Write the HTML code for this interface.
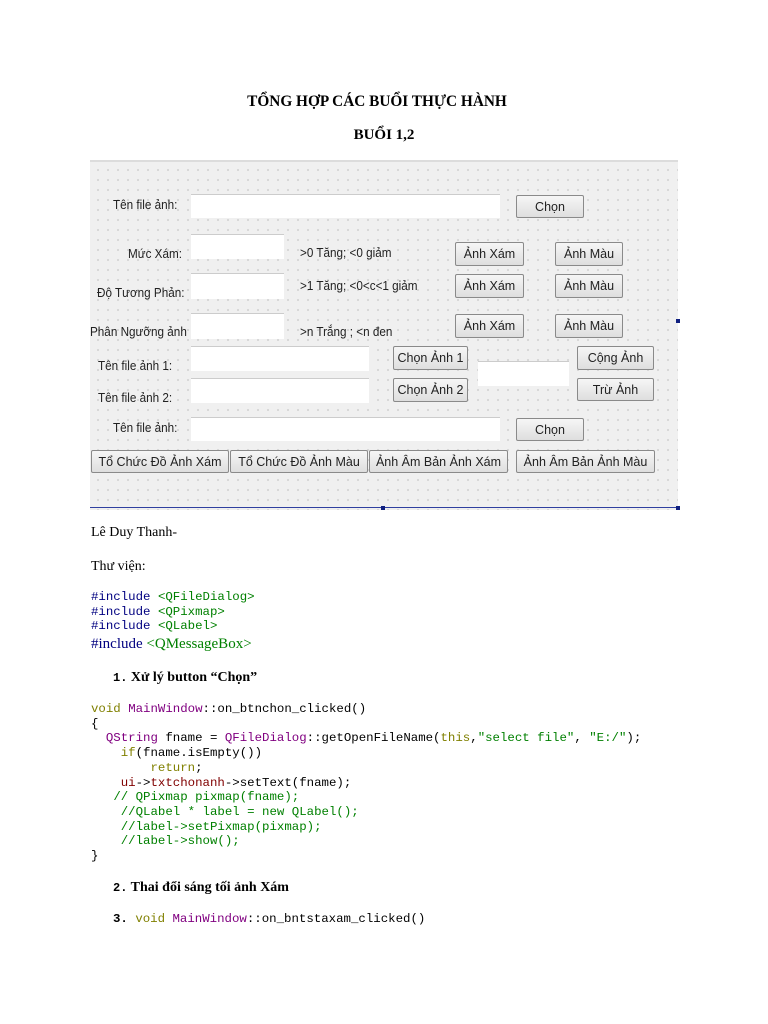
<!DOCTYPE html>
<html><head><meta charset="utf-8"><style>
body{margin:0;width:768px;height:1024px;background:#fff;position:relative;overflow:hidden;font-family:"Liberation Serif",serif;color:#000}
.a{position:absolute;white-space:pre}
.panel{position:absolute;left:90px;top:160px;width:588px;height:348px;background-color:#f0f0f0;background-image:radial-gradient(circle,#b8b8b8 0.6px,transparent 0.9px);background-size:10px 10px;background-position:3px 3px;border-top:2px solid #dcdcdc}
.l{position:absolute;font-family:"Liberation Sans",sans-serif;font-size:13px;color:#222;white-space:pre;transform:scaleX(0.9);transform-origin:left center;margin-top:3px}
.i{position:absolute;background:#fff;border-top:1px solid #ccc}
.b{position:absolute;box-sizing:border-box;border:1px solid #8a8a8a;border-radius:2px;background:linear-gradient(#f6f6f6,#dedede);font-family:"Liberation Sans",sans-serif;font-size:12.5px;color:#222;display:flex;align-items:center;justify-content:center;white-space:pre}
.c{position:absolute;font-family:"Liberation Mono",monospace;font-size:12.4px;white-space:pre;line-height:14.7px}
.k{color:#808000}.p{color:#800080}.g{color:#008000}.n{color:#000080}.r{color:#800000}
</style></head><body>
<div class="a" style="left:0;width:754px;text-align:center;top:93px;font-weight:bold;font-size:15.3px">TỔNG HỢP CÁC BUỔI THỰC HÀNH</div>
<div class="a" style="left:0;width:768px;text-align:center;top:127px;font-weight:bold;font-size:15px">BUỔI 1,2</div>

<div class="panel"></div>
<div class="a" style="left:90px;top:507px;width:588px;height:1px;background:#3040a0"></div>
<div class="a" style="left:381px;top:506px;width:4px;height:4px;background:#102080"></div>
<div class="a" style="left:676px;top:506px;width:4px;height:4px;background:#102080"></div>
<div class="a" style="left:676px;top:319px;width:4px;height:4px;background:#102080"></div>

<div class="l" style="left:113px;top:194px">Tên file ảnh:</div>
<div class="i" style="left:191px;top:194px;width:309px;height:23px"></div>
<div class="b" style="left:516px;top:195px;width:68px;height:23px">Chọn</div>

<div class="l" style="left:128px;top:243px">Mức Xám:</div>
<div class="i" style="left:191px;top:234px;width:93px;height:24px"></div>
<div class="l" style="left:300px;top:242px">&gt;0 Tăng; &lt;0 giảm</div>
<div class="b" style="left:455px;top:242px;width:69px;height:24px">Ảnh Xám</div>
<div class="b" style="left:555px;top:242px;width:68px;height:24px">Ảnh Màu</div>

<div class="l" style="left:97px;top:282px">Độ Tương Phản:</div>
<div class="i" style="left:191px;top:273px;width:93px;height:25px"></div>
<div class="l" style="left:300px;top:275px">&gt;1 Tăng; &lt;0&lt;c&lt;1 giảm</div>
<div class="b" style="left:455px;top:274px;width:69px;height:24px">Ảnh Xám</div>
<div class="b" style="left:555px;top:274px;width:68px;height:24px">Ảnh Màu</div>

<div class="l" style="left:90px;top:321px">Phân Ngưỡng ảnh</div>
<div class="i" style="left:191px;top:313px;width:93px;height:25px"></div>
<div class="l" style="left:300px;top:321px">&gt;n Trắng ; &lt;n đen</div>
<div class="b" style="left:455px;top:314px;width:69px;height:24px">Ảnh Xám</div>
<div class="b" style="left:555px;top:314px;width:68px;height:24px">Ảnh Màu</div>

<div class="l" style="left:98px;top:355px">Tên file ảnh 1:</div>
<div class="i" style="left:191px;top:346px;width:178px;height:24px"></div>
<div class="b" style="left:393px;top:346px;width:75px;height:24px">Chọn Ảnh 1</div>
<div class="i" style="left:478px;top:361px;width:91px;height:24px"></div>
<div class="b" style="left:577px;top:346px;width:77px;height:24px">Cộng Ảnh</div>

<div class="l" style="left:98px;top:387px">Tên file ảnh 2:</div>
<div class="i" style="left:191px;top:378px;width:178px;height:24px"></div>
<div class="b" style="left:393px;top:378px;width:75px;height:24px">Chọn Ảnh 2</div>
<div class="b" style="left:577px;top:378px;width:77px;height:23px">Trừ Ảnh</div>

<div class="l" style="left:113px;top:417px">Tên file ảnh:</div>
<div class="i" style="left:191px;top:417px;width:309px;height:23px"></div>
<div class="b" style="left:516px;top:418px;width:68px;height:23px">Chọn</div>

<div class="b" style="left:91px;top:450px;width:138px;height:23px">Tổ Chức Đồ Ảnh Xám</div>
<div class="b" style="left:230px;top:450px;width:138px;height:23px">Tổ Chức Đồ Ảnh Màu</div>
<div class="b" style="left:369px;top:450px;width:139px;height:23px">Ảnh Âm Bản Ảnh Xám</div>
<div class="b" style="left:516px;top:450px;width:139px;height:23px">Ảnh Âm Bản Ảnh Màu</div>

<div class="a" style="left:91px;top:525px;font-size:14px">Lê Duy Thanh-</div>
<div class="a" style="left:91px;top:559px;font-size:14px">Thư viện:</div>

<div class="c" style="left:91px;top:590px"><span class="n">#include</span> <span class="g">&lt;QFileDialog&gt;</span>
<span class="n">#include</span> <span class="g">&lt;QPixmap&gt;</span>
<span class="n">#include</span> <span class="g">&lt;QLabel&gt;</span></div>
<div class="a" style="left:91px;top:636px;font-size:15px"><span class="n">#include</span> <span class="g">&lt;QMessageBox&gt;</span></div>

<div class="a" style="left:113px;top:670px;font-size:14px;font-weight:bold"><span style="font-family:'Liberation Mono',monospace;font-size:12px">1.</span> Xử lý button “Chọn”</div>

<div class="c" style="left:91px;top:702px"><span class="k">void</span> <span class="p">MainWindow</span>::on_btnchon_clicked()
{
  <span class="p">QString</span> fname = <span class="p">QFileDialog</span>::getOpenFileName(<span class="k">this</span>,<span class="g">"select file"</span>, <span class="g">"E:/"</span>);
    <span class="k">if</span>(fname.isEmpty())
        <span class="k">return</span>;
    <span class="r">ui</span>-&gt;<span class="r">txtchonanh</span>-&gt;setText(fname);
   <span class="g">// QPixmap pixmap(fname);</span>
    <span class="g">//QLabel * label = new QLabel();</span>
    <span class="g">//label-&gt;setPixmap(pixmap);</span>
    <span class="g">//label-&gt;show();</span>
}</div>

<div class="a" style="left:113px;top:880px;font-size:14px;font-weight:bold"><span style="font-family:'Liberation Mono',monospace;font-size:12px">2.</span> Thai đổi sáng tối ảnh Xám</div>
<div class="c" style="left:113px;top:912px"><b>3.</b> <span class="k">void</span> <span class="p">MainWindow</span>::on_bntstaxam_clicked()</div>
</body></html>
